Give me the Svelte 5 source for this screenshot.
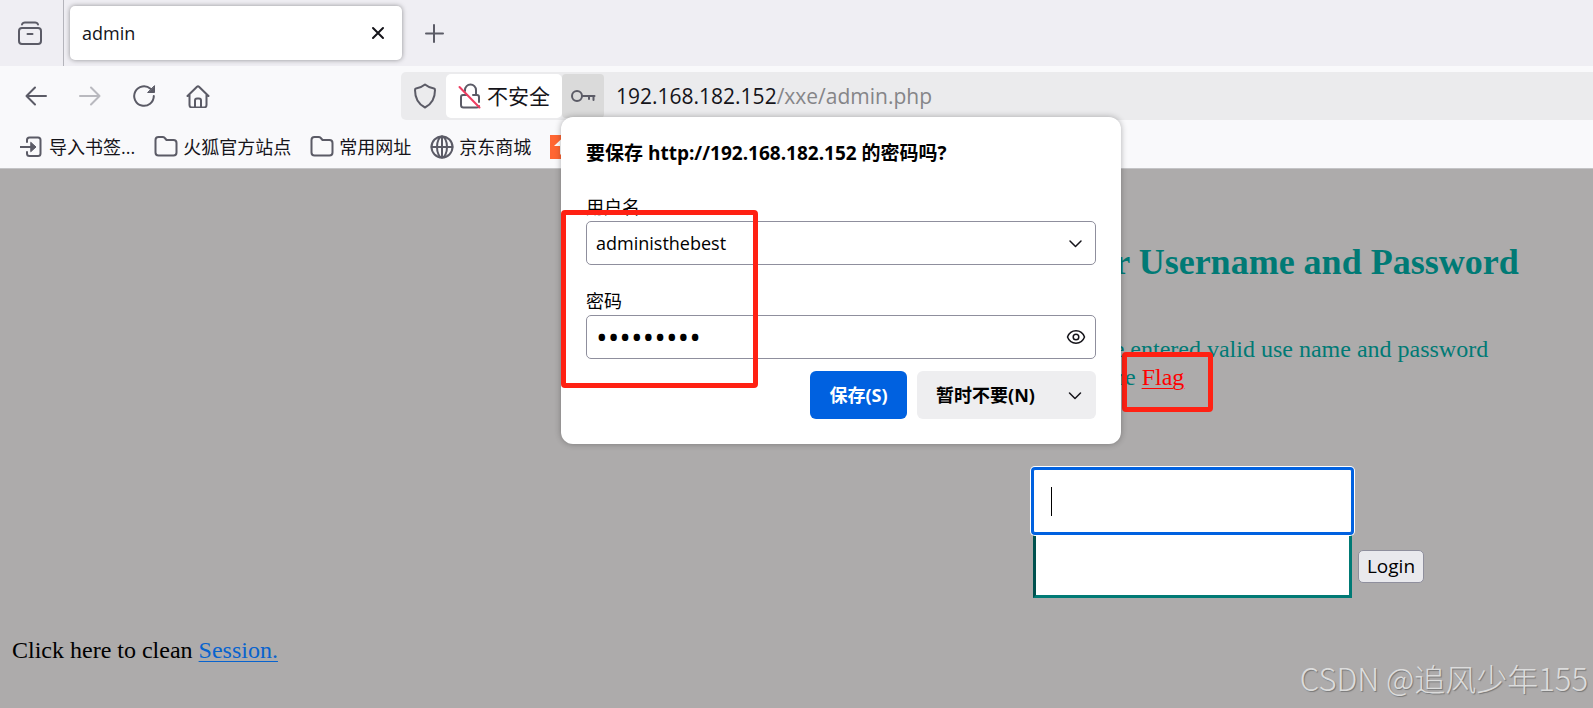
<script lang="ts">
  const bookmarks = [
    { label: "导入书签...", icon: "import" },
    { label: "火狐官方站点", icon: "folder" },
    { label: "常用网址", icon: "folder" },
    { label: "京东商城", icon: "globe" },
  ];

  let username = $state("administhebest");
  let password = $state("admin@123");
</script>

<div class="browser">
  <header class="chrome">
    <div class="tabstrip">
      <button class="icon-button view" aria-label="Firefox View">
        <svg width="26" height="26" viewBox="0 0 26 26">
          <rect x="2" y="8" width="22" height="16" rx="3" />
          <path d="M5 4.500C5.500 3 6.500 2.500 8 2.500h10c1.500 0 2.500 .5 3 2M10.500 14h5" />
        </svg>
      </button>
      <div class="tab">
        <span>admin</span>
        <button class="icon-button close" aria-label="关闭标签页">
          <svg width="14" height="14" viewBox="0 0 14 14"><path d="M2 2l10 10M12 2L2 12" /></svg>
        </button>
      </div>
      <button class="icon-button plus" aria-label="新建标签页">
        <svg width="20" height="20" viewBox="0 0 20 20"><path d="M10 2v17M2 10.500h17" /></svg>
      </button>
    </div>

    <nav class="toolbar">
      <div class="nav-buttons">
        <button class="icon-button" aria-label="后退">
          <svg width="24" height="24" viewBox="0 0 24 24"><path d="M22 12H2.500M11 3.500L2.500 12l8.500 8.500" /></svg>
        </button>
        <button class="icon-button" aria-label="前进" disabled>
          <svg width="24" height="24" viewBox="0 0 24 24"><path d="M2 12h19.500M13 3.500l8.500 8.500-8.500 8.500" /></svg>
        </button>
        <button class="icon-button" aria-label="刷新">
          <svg width="24" height="24" viewBox="0 0 24 24">
            <path d="M21.800 12A9.800 9.800 0 1 1 18.500 4.700" />
            <path class="solid" d="M22.500 2v6.500h-6.500z" />
          </svg>
        </button>
        <button class="icon-button" aria-label="主页">
          <svg width="24" height="24" viewBox="0 0 24 24">
            <path d="M1.500 12L11 2.800q1-1 2 0l9.500 9.200M3.500 10.500v10.500q0 2.500 2.500 2.500h12q2.500 0 2.500-2.500V10.500M9 23.500v-7q0-2 2-2h2q2 0 2 2v7" />
          </svg>
        </button>
      </div>

      <div class="urlbar">
        <button class="icon-button shield" aria-label="跟踪保护">
          <svg width="26" height="26" viewBox="0 0 26 26">
            <path d="M13 1.500c3 2.500 6 3.500 9 4q1 .3 1 1.500c0 8-3 14-10 17.500C6 21 3 15 3 7q0-1.200 1-1.500c3-.5 6-1.500 9-4z" />
          </svg>
        </button>
        <button class="identity">
          <svg width="24" height="26" viewBox="0 0 24 26">
            <path d="M7 8V7a5.500 5.500 0 0 1 11 0v4M9 12H5q-2 0-2 2v8q0 2.500 2.500 2.500h13q2.500 0 2.500-1.500M15 12h4q2 0 2 2v5" />
            <path class="slash" d="M1.500 4l20 20.500" />
          </svg>
          <span>不安全</span>
        </button>
        <div class="key-anchor">
          <button class="icon-button key" aria-label="保存密码">
            <svg width="26" height="26" viewBox="0 0 26 26">
              <circle cx="7" cy="13" r="5" />
              <path d="M12 13h12.500M19 13v3M23.500 13v4" />
            </svg>
          </button>

          <section class="popup" aria-labelledby="popup-title">
            <h2 id="popup-title">要保存 http://192.168.182.152 的密码吗?</h2>
            <label for="saved-user">用户名</label>
            <div class="field">
              <input id="saved-user" type="text" bind:value={username} />
              <button class="icon-button" aria-label="选择用户名">
                <svg width="20" height="16" viewBox="0 0 20 16"><path d="M4 6l5.500 5.500L15 6" /></svg>
              </button>
            </div>
            <label for="saved-pass">密码</label>
            <div class="field">
              <input id="saved-pass" type="password" bind:value={password} />
              <button class="icon-button" aria-label="显示密码">
                <svg width="20" height="16" viewBox="0 0 20 16">
                  <path d="M1.500 8C3 4 6 1.800 10 1.800S17 4 18.500 8C17 12 14 14.200 10 14.200S3 12 1.500 8z" />
                  <circle cx="10" cy="8" r="2.800" />
                </svg>
              </button>
            </div>
            <div class="actions">
              <button class="save">保存(S)</button>
              <div class="split">
                <button class="later">暂时不要(N)</button>
                <button class="icon-button more" aria-label="更多选项">
                  <svg width="20" height="16" viewBox="0 0 20 16"><path d="M4.500 6l5.500 5.500L15.500 6" /></svg>
                </button>
              </div>
            </div>
            <div class="mark mark--fields"></div>
          </section>
        </div>
        <div class="address"><span>192.168.182.152</span>/xxe/admin.php</div>
      </div>
    </nav>

    <div class="bookmarks">
      {#each bookmarks as bookmark}
        <a href="#{bookmark.icon}">
          <svg width="24" height="24" viewBox="0 0 24 24">
            {#if bookmark.icon === "import"}
              <path d="M7 7V5q0-2.500 2.500-2.500H18q2.500 0 2.500 2.500v13.500q0 2.500-2.500 2.500H9.500Q7 21 7 18.500V17M0 12h12" />
              <path class="solid" d="M11 7.500l5 4.500-5 4.500z" />
            {:else if bookmark.icon === "folder"}
              <path d="M1.500 5q0-3 3-3h4q1.500 0 2.300 1l1.700 2h7q3 0 3 3v9.500q0 3-3 3h-15q-3 0-3-3z" />
            {:else}
              <circle cx="12" cy="12" r="10.500" />
              <ellipse cx="12" cy="12" rx="5" ry="10.500" />
              <path d="M1.500 12h21M12 1.500v21" />
            {/if}
          </svg>
          <span>{bookmark.label}</span>
        </a>
      {/each}
      <a class="burp" href="#burp" aria-label="Burp">
        <svg width="24" height="24" viewBox="0 0 24 24">
          <rect width="24" height="24" />
          <path d="M12.500 3L4 11h6v9l9-10h-6z" />
        </svg>
      </a>
    </div>
  </header>

  <main>
    <div class="login">
      <h1>Enter Username and Password</h1>
      <p>
        you have entered valid use name and password<br />
        here is the <span class="flag"><a href="#flag">Flag</a><span class="mark mark--flag"></span></span>
      </p>
      <form onsubmit={(e) => e.preventDefault()}>
        <input class="active" type="text" aria-label="Username" />
        <div class="row">
          <input type="password" aria-label="Password" />
          <button type="submit">Login</button>
        </div>
      </form>
    </div>
    <p class="session">Click here to clean <a href="#session">Session.</a></p>
    <div class="watermark">CSDN @追风少年155</div>
  </main>
</div>

<style>
  :global(body) {
    margin: 0;
  }

  .browser {
    display: flex;
    flex-direction: column;
    min-height: 100vh;
    overflow: hidden;
    color: #15141a;
    font-family: "Open Sans", "Noto Sans CJK SC", sans-serif;
    font-size: 18px;
    line-height: 24px;
  }

  button,
  input {
    box-sizing: border-box;
    margin: 0;
    padding: 0;
    border: 0;
    background: none;
    color: inherit;
    font: inherit;
  }

  a {
    color: inherit;
    text-decoration-thickness: 1px;
    text-underline-offset: 3px;
  }

  svg {
    display: block;
    flex: none;
    fill: none;
    stroke: #5b5b66;
    stroke-width: 2;
    stroke-linecap: round;
    stroke-linejoin: round;
  }

  .solid {
    fill: #5b5b66;
    stroke-width: 1;
  }

  .icon-button {
    display: grid;
    place-items: center;
  }

  /* tab strip */
  .tabstrip {
    display: flex;
    align-items: center;
    height: 66px;
    background: #efeef3;
  }

  .view {
    width: 64px;
    height: 66px;
    padding-right: 4px;
    border-right: 1px solid #b4b4bb;
  }

  .tab {
    display: flex;
    align-items: center;
    justify-content: space-between;
    box-sizing: border-box;
    width: 332px;
    height: 54px;
    margin-left: 6px;
    padding: 0 17px 0 12px;
    border-radius: 5px;
    background: #fff;
    box-shadow: 0 0 5px rgba(0, 0, 0, 0.4);
  }

  .close svg { stroke: #15141a; }

  .plus {
    width: 64px;
    height: 48px;
  }

  /* navigation toolbar */
  .toolbar {
    display: flex;
    align-items: center;
    height: 60px;
    background: #f9f9fb;
  }

  .nav-buttons {
    display: flex;
    gap: 6px;
    width: 401px;
    box-sizing: border-box;
    padding-left: 12px;
  }

  .nav-buttons button {
    width: 48px;
    height: 48px;
  }

  .nav-buttons button:disabled { opacity: 0.4; }

  .urlbar {
    display: flex;
    flex: 1;
    align-items: center;
    height: 48px;
    border-radius: 5px 0 0 5px;
    background: #ebebed;
    font-size: 21px;
  }

  .shield {
    width: 45px;
    height: 44px;
    padding-left: 2px;
  }

  .identity {
    display: flex;
    align-items: center;
    gap: 5px;
    width: 116px;
    height: 44px;
    padding-left: 12px;
    border-radius: 5px;
    background: #fff;
  }

  .identity .slash { stroke: #ee3d61; }

  .key-anchor { position: relative; }

  .key {
    width: 42px;
    height: 44px;
    border-radius: 4px;
    background: #dadada;
  }

  .address {
    padding-left: 12px;
    color: #858588;
    white-space: nowrap;
  }

  .address span { color: #15141a; }

  /* bookmarks */
  .bookmarks {
    display: flex;
    align-items: center;
    gap: 19px;
    height: 42px;
    padding-left: 20px;
    border-bottom: 1px solid #c4c4c6;
    background: #f9f9fb;
  }

  .bookmarks a {
    display: flex;
    align-items: center;
    gap: 5px;
    text-decoration: none;
    white-space: nowrap;
  }

  .burp svg {
    fill: #ff6633;
    stroke: none;
  }

  .burp path { fill: #fff; }

  /* save password popup */
  .popup {
    position: absolute;
    z-index: 2;
    top: 43px;
    left: -1px;
    box-sizing: border-box;
    width: 560px;
    padding: 24px 25px 25px;
    border-radius: 12px;
    background: #fff;
    box-shadow: 0 0 6px rgba(0, 0, 0, 0.3);
    color: #000;
    font-size: 18px;
  }

  .popup h2 {
    margin: 0 0 30px;
    font-size: 19px;
    font-weight: 700;
    line-height: 24px;
  }

  .popup label {
    display: block;
    margin-bottom: 2px;
    line-height: 24px;
  }

  .field {
    display: flex;
    align-items: center;
    box-sizing: border-box;
    height: 44px;
    margin-bottom: 24px;
    padding: 0 9px;
    border: 1px solid #8f8f9d;
    border-radius: 5px;
  }

  .field input {
    flex: 1;
    min-width: 0;
    height: 40px;
    outline: none;
  }

  .field input[type="password"] { font-size: 31px; }

  .popup svg {
    stroke: #15141a;
    stroke-width: 1.5;
  }

  .actions {
    display: flex;
    justify-content: flex-end;
    gap: 10px;
    margin-top: -12px;
    font-weight: 700;
  }

  .save {
    width: 97px;
    height: 48px;
    border-radius: 6px;
    background: #0061e0;
    color: #fff;
  }

  .split {
    display: flex;
    width: 179px;
    border-radius: 6px;
    background: #eeeef0;
  }

  .later { flex: 1; }

  .more { width: 42px; }

  .mark {
    position: absolute;
    box-sizing: border-box;
    border: 5px solid #ff2113;
    border-radius: 4px;
    pointer-events: none;
  }

  .mark--fields {
    top: 93px;
    left: 0;
    width: 197px;
    height: 178px;
  }

  .mark--flag {
    top: -12px;
    left: -20px;
    width: 91px;
    height: 60px;
  }

  /* page */
  main {
    position: relative;
    flex: 1;
    background: #adabab;
    color: #000;
    font-family: "Liberation Serif", serif;
    font-size: 24px;
    line-height: 28px;
  }

  .login {
    width: 495px;
    margin-left: auto;
    padding: 72px 65px 0 0;
    color: #007a75;
  }

  .login h1 {
    margin: 0;
    font-size: 36px;
    line-height: 42px;
    text-align: center;
  }

  .login p {
    margin: 52px 0 78px;
    padding-left: 4px;
    white-space: nowrap;
  }

  .flag {
    position: relative;
    color: #f00;
  }

  form input {
    display: block;
    width: 319px;
    height: 65px;
    padding: 0 16px;
    border: 3px solid #007a75;
    border-top-color: #00514e;
    border-left-color: #00514e;
    background: #fff;
    color: #000;
  }

  form .active {
    position: relative;
    height: 64px;
    border: 1px solid #0061e0;
    border-radius: 2px;
    outline: none;
    background: linear-gradient(#000, #000) 17px center / 1px 29px no-repeat #fff;
    box-shadow: 0 0 0 2px #0061e0, 0 0 0 3px #fff;
  }

  .row {
    display: flex;
    align-items: baseline;
    gap: 6px;
  }

  form button {
    width: 66px;
    height: 33px;
    border: 1px solid #8f8f9d;
    border-radius: 5px;
    background: #e9e9ed;
    color: #000;
    font-family: "Open Sans", sans-serif;
    font-size: 19px;
  }

  .session {
    margin: 0;
    padding: 38px 12px;
  }

  .session a { color: #0863ce; }

  .watermark {
    position: absolute;
    right: 5px;
    bottom: 10px;
    color: #dcdcdc;
    font-family: "Noto Sans CJK SC", sans-serif;
    font-size: 31px;
    font-weight: 300;
    line-height: 40px;
    text-shadow: 1px 1px 1px #777;
  }
</style>
